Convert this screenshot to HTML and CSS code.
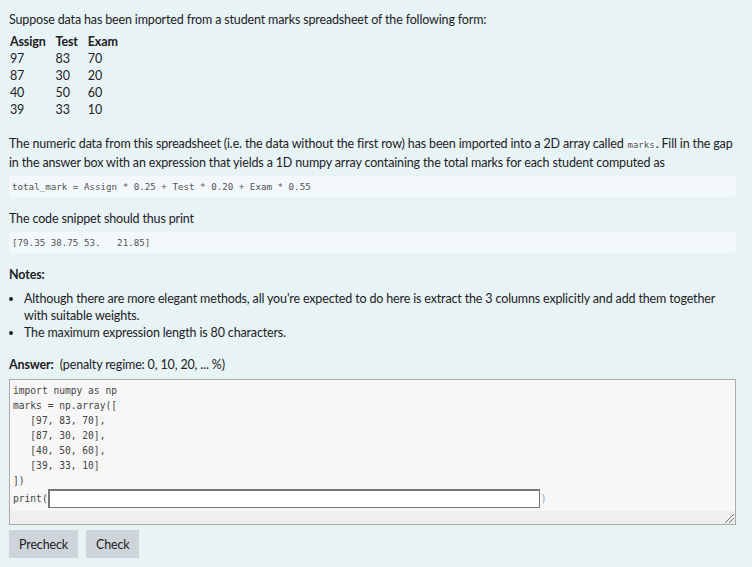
FILE: index.html
```html
<!DOCTYPE html>
<html>
  <head>
    <title>Student marks question</title>
    <link rel="stylesheet" href="styles.css">
  </head>
  <body>
    <div class="formulation">
      <p class="lead">Suppose data has been imported from a student marks spreadsheet of the following form:</p>
      <table class="marks-table">
        <tr><th>Assign</th><th>Test</th><th>Exam</th></tr>
        <tr><td>97</td><td>83</td><td>70</td></tr>
        <tr><td>87</td><td>30</td><td>20</td></tr>
        <tr><td>40</td><td>50</td><td>60</td></tr>
        <tr><td>39</td><td>33</td><td>10</td></tr>
      </table>
      <p class="para">The numeric data from this spreadsheet (i.e. the data without the first row) has been imported into a 2D array called <code>marks</code>. Fill in the gap in the answer box with an expression that yields a 1D numpy array containing the total marks for each student computed as</p>
      <pre class="snippet">total_mark = Assign * 0.25 + Test * 0.20 + Exam * 0.55</pre>
      <p class="para">The code snippet should thus print</p>
      <pre class="snippet">[79.35 38.75 53.   21.85]</pre>
      <h4 class="notes">Notes:</h4>
      <ul class="note-list">
        <li>Although there are more elegant methods, all you're expected to do here is extract the 3 columns explicitly and add them together with suitable weights.</li>
        <li>The maximum expression length is 80 characters.</li>
      </ul>
      <div class="answer-label"><b>Answer:</b>&nbsp; (penalty regime: 0, 10, 20, ... %)</div>
      <div class="answer-box">
        <div class="answer-code">
<pre>import numpy as np
marks = np.array([
   [97, 83, 70],
   [87, 30, 20],
   [40, 50, 60],
   [39, 33, 10]
])</pre>
          <div class="print-line"><span>print(</span><input type="text" class="gap"><span class="close">)</span></div>
        </div>
        <div class="resize-strip"><span class="grip"></span></div>
      </div>
      <div class="buttons">
        <button type="button">Precheck</button>
        <button type="button">Check</button>
      </div>
    </div>
  </body>
</html>
```
FILE: styles.css
```css
* {
  box-sizing: border-box;
}

body {
  margin: 0;
  padding: 0;
  background-color: #fff;
  font-family: Lato, "Open Sans", sans-serif;
  font-size: 12.5px;
  letter-spacing: -0.15px;
  line-height: 17px;
  color: #1d2125;
}

.formulation {
  width: 752px;
  height: 567px;
  background-color: #e7f3f5;
  padding: 11px 16px 0 9px;
}

p {
  margin: 0;
}

.lead {
  margin-bottom: 5px;
}

.marks-table {
  border-collapse: collapse;
  margin-bottom: 17px;
}

.marks-table th,
.marks-table td {
  padding: 0 9px 0 1px;
  text-align: left;
  vertical-align: top;
}

.marks-table th {
  font-weight: bold;
}

code {
  font-family: "DejaVu Sans Mono", monospace;
  font-size: 9px;
  letter-spacing: 0;
  color: #555;
  background-color: #f2f8fb;
  padding: 0 1px;
}

.snippet {
  margin: 5px 0 13px;
  padding: 0 3px;
  height: 21px;
  line-height: 21px;
  background-color: #f2f8fb;
  border-radius: 3px;
  font-family: "DejaVu Sans Mono", monospace;
  font-size: 9.2px;
  letter-spacing: 0;
  color: #555;
}

.notes {
  margin: 0 0 7px;
  font-size: 12.5px;
  font-weight: bold;
}

.note-list {
  margin: 0 0 15px;
  padding-left: 15px;
}

.answer-label {
  margin-bottom: 6px;
}

.answer-box {
  border: 1px solid #aaa;
  background-color: #efefef;
}

.answer-code {
  background-color: #f7f7f7;
  padding: 3px 3px 3px;
}

.answer-code pre {
  margin: 0;
  font-family: "DejaVu Sans Mono", monospace;
  font-size: 9.6px;
  letter-spacing: 0;
  line-height: 15px;
  color: #444;
}

.print-line {
  display: flex;
  align-items: center;
  font-family: "DejaVu Sans Mono", monospace;
  font-size: 9.6px;
  letter-spacing: 0;
  color: #444;
  margin-top: 1px;
}

.gap {
  width: 492px;
  height: 19px;
  border: 1px solid #767676;
  border-top-width: 2px;
  border-left-width: 2px;
  background: #fff;
  margin: 0;
  padding: 0 2px;
}

.close {
  color: #8aa7c9;
  margin-left: 1px;
}

.resize-strip {
  height: 13px;
  position: relative;
}

.grip {
  position: absolute;
  right: 1px;
  bottom: 1px;
  width: 9px;
  height: 9px;
  background: linear-gradient(135deg, transparent 45%, #777 45%, #777 52%, transparent 52%, transparent 70%, #777 70%, #777 77%, transparent 77%);
}

.buttons {
  display: flex;
  gap: 8px;
  margin-top: 5px;
}

button {
  font-family: inherit;
  font-size: 12.5px;
  letter-spacing: -0.15px;
  color: #1d2125;
  background-color: #ced4da;
  border: none;
  border-radius: 0;
  height: 28px;
  padding: 0 10px;
  cursor: pointer;
}
```
